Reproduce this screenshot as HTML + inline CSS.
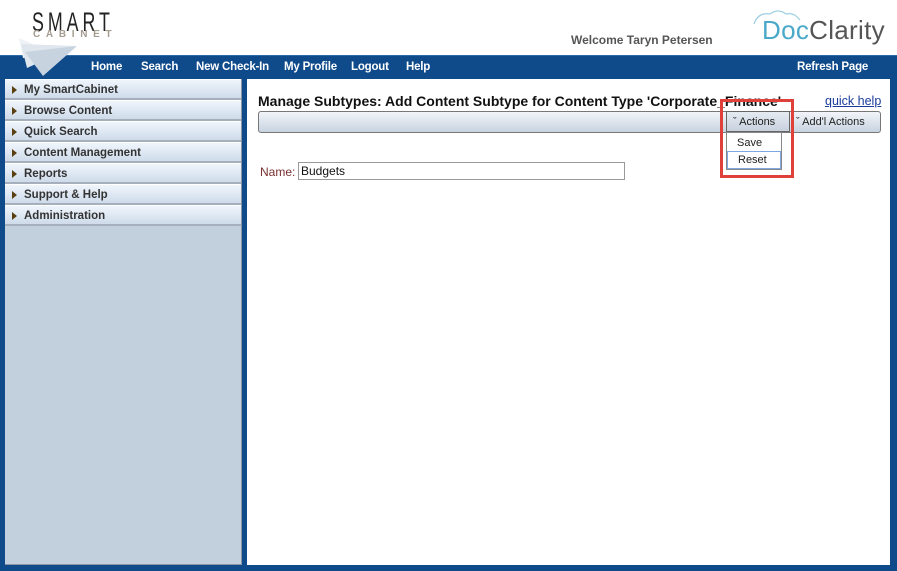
<!DOCTYPE html>
<html><head><meta charset="utf-8">
<style>
*{margin:0;padding:0;box-sizing:border-box}
body{width:897px;height:571px;overflow:hidden;background:#0f4a8a;font-family:"Liberation Sans",Tahoma,sans-serif;position:relative}
#hdr{position:absolute;left:0;top:0;width:897px;height:55px;background:#fff}
#nav{position:absolute;left:0;top:55px;width:897px;height:24px;background:#0f4a8a;border-top:1px solid #2e6aa8}
#nav span{position:absolute;top:5px;color:#fff;font-size:11.5px;font-weight:bold;letter-spacing:-0.2px}
#side{position:absolute;left:5px;top:79px;width:237px;height:486px;background:#c2cfdd;border-right:1px solid #8a96a5;border-bottom:1px solid #8a96a5}
.it{height:21px;background:linear-gradient(#f0f5fb,#dce6f2 60%,#cfdbea);border-bottom:2px solid #a6b0bc;border-top:1px solid #fff;position:relative;font-weight:bold;font-size:11.5px;color:#333;padding:4px 0 0 19px}
.it:before{content:"";position:absolute;left:7px;top:6px;border-left:5px solid #5a4010;border-top:4px solid transparent;border-bottom:4px solid transparent}
#main{position:absolute;left:247px;top:79px;width:643px;height:486px;background:#fff}
</style></head><body>
<div id="hdr">
<div style="position:absolute;left:32px;top:7px;font-size:27px;letter-spacing:6px;color:#222;transform:scaleX(0.66);transform-origin:left">SMART</div>
<div style="position:absolute;left:33px;top:29px;font-size:10px;letter-spacing:5.7px;color:#a59c90;font-weight:bold">CABINET</div>
<div style="position:absolute;left:571px;top:33px;font-size:12px;font-weight:bold;color:#555">Welcome Taryn Petersen</div>
<svg style="position:absolute;left:752px;top:8px" width="50" height="18"><path d="M2 16 Q6 4 18 6 Q26 0 34 6 Q42 4 48 12" fill="none" stroke="#9fd0e3" stroke-width="1.2"/></svg>
<div style="position:absolute;left:762px;top:15px;font-size:26px;color:#4aa8c9;letter-spacing:0.3px">Doc<span style="color:#555">Clarity</span></div>
</div>
<div id="nav">
<span style="left:91px">Home</span><span style="left:141px">Search</span><span style="left:196px">New Check-In</span><span style="left:284px">My Profile</span><span style="left:351px">Logout</span><span style="left:406px">Help</span><span style="left:797px">Refresh Page</span>
</div>
<svg style="position:absolute;left:15px;top:20px" width="65" height="58"><polygon points="4,18 8,38 40,34" fill="#eef2f6"/><polygon points="6,24 12,48 60,26" fill="#dfe6ee"/><polygon points="10,32 28,56 62,26" fill="#c7d3df"/></svg>
<div id="side">
<div class="it">My SmartCabinet</div><div class="it">Browse Content</div><div class="it">Quick Search</div><div class="it">Content Management</div><div class="it">Reports</div><div class="it">Support &amp; Help</div><div class="it">Administration</div>
</div>
<div id="main">
<div style="position:absolute;left:11px;top:14px;font-size:14px;font-weight:bold;color:#111">Manage Subtypes: Add Content Subtype for Content Type 'Corporate_Finance'</div>
<div style="position:absolute;left:578px;top:15px;font-size:12.5px;color:#1a3d9c;text-decoration:underline">quick help</div>
<div style="position:absolute;left:11px;top:32px;width:623px;height:22px;border:1px solid #777;border-radius:3px;background:linear-gradient(#f2f5f9,#c8d3e1)"></div>
<div style="position:absolute;left:479px;top:32px;width:64px;height:21px;border:1px solid #666;background:linear-gradient(#e6ebf2,#c7d1de);font-size:11px;color:#222;padding:4px 0 0 6px">&#711; Actions</div>
<div style="position:absolute;left:547px;top:33px;font-size:11px;color:#222;padding:4px 0 0 2px">&#711; Add'l Actions</div>
<div style="position:absolute;left:479px;top:53px;width:56px;height:38px;background:#fff;border:1px solid #888"></div>
<div style="position:absolute;left:490px;top:58px;font-size:11px;color:#222">Save</div>
<div style="position:absolute;left:480px;top:72px;width:54px;height:18px;border:1px solid #7fa7e0;font-size:11px;color:#222;padding:2px 0 0 10px">Reset</div>
<div style="position:absolute;left:473px;top:20px;width:74px;height:79px;border:3px solid #e0403a"></div>
<div style="position:absolute;left:13px;top:86px;font-size:12px;color:#7a3030">Name:</div>
<div style="position:absolute;left:51px;top:83px;width:327px;height:18px;border:1px solid #999;font-size:12px;color:#111;padding:1px 0 0 2px">Budgets</div>
</div>
</body></html>
